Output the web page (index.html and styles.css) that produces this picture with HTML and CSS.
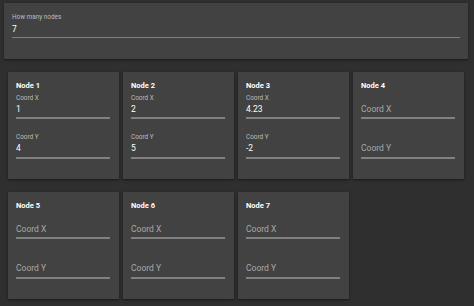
FILE: index.html
```html
<!DOCTYPE html>
<html lang="en">
<head>
  <meta charset="UTF-8">
  <meta name="viewport" content="width=device-width, initial-scale=1.0">
  <title>Nodes</title>
  <link rel="stylesheet" href="styles.css">
</head>
<body>
  <section class="card count-card">
    <div class="field">
      <label class="field-label" for="count">How many nodes</label>
      <input class="field-input" id="count" type="text" value="7">
    </div>
  </section>

  <section class="node-grid">
    <div class="card node-card">
      <h3>Node 1</h3>
      <div class="field">
        <label class="field-label">Coord X</label>
        <input class="field-input" type="text" value="1">
      </div>
      <div class="field">
        <label class="field-label">Coord Y</label>
        <input class="field-input" type="text" value="4">
      </div>
    </div>
    <div class="card node-card">
      <h3>Node 2</h3>
      <div class="field">
        <label class="field-label">Coord X</label>
        <input class="field-input" type="text" value="2">
      </div>
      <div class="field">
        <label class="field-label">Coord Y</label>
        <input class="field-input" type="text" value="5">
      </div>
    </div>
    <div class="card node-card">
      <h3>Node 3</h3>
      <div class="field">
        <label class="field-label">Coord X</label>
        <input class="field-input" type="text" value="4.23">
      </div>
      <div class="field">
        <label class="field-label">Coord Y</label>
        <input class="field-input" type="text" value="-2">
      </div>
    </div>
    <div class="card node-card">
      <h3>Node 4</h3>
      <div class="field">
        <label class="field-label"></label>
        <input class="field-input" type="text" placeholder="Coord X">
      </div>
      <div class="field">
        <label class="field-label"></label>
        <input class="field-input" type="text" placeholder="Coord Y">
      </div>
    </div>
    <div class="card node-card">
      <h3>Node 5</h3>
      <div class="field">
        <label class="field-label"></label>
        <input class="field-input" type="text" placeholder="Coord X">
      </div>
      <div class="field">
        <label class="field-label"></label>
        <input class="field-input" type="text" placeholder="Coord Y">
      </div>
    </div>
    <div class="card node-card">
      <h3>Node 6</h3>
      <div class="field">
        <label class="field-label"></label>
        <input class="field-input" type="text" placeholder="Coord X">
      </div>
      <div class="field">
        <label class="field-label"></label>
        <input class="field-input" type="text" placeholder="Coord Y">
      </div>
    </div>
    <div class="card node-card">
      <h3>Node 7</h3>
      <div class="field">
        <label class="field-label"></label>
        <input class="field-input" type="text" placeholder="Coord X">
      </div>
      <div class="field">
        <label class="field-label"></label>
        <input class="field-input" type="text" placeholder="Coord Y">
      </div>
    </div>
  </section>
</body>
</html>
```

FILE: styles.css
```css
:root {
  --bg-color: #2f2f2f;
  --card-color: #424242;
  --text-color: #ffffff;
  --label-color: #bdbdbd;
  --hint-color: #a8a8a8;
  --line-color: #808080;
}

* {
  margin: 0;
  padding: 0;
  box-sizing: border-box;
  font-family: Roboto, 'Liberation Sans', sans-serif;
}

body {
  background: var(--bg-color);
  color: var(--text-color);
  padding: 3px 6px 0 4px;
  min-height: 100vh;
}

.card {
  background: var(--card-color);
  box-shadow: 0 1px 3px rgba(0, 0, 0, 0.3), 0 1px 1px rgba(0, 0, 0, 0.2);
}

.count-card {
  height: 56px;
  padding: 10px 8px 0 8px;
}

.node-grid {
  display: grid;
  grid-template-columns: repeat(4, 111px);
  column-gap: 4px;
  row-gap: 13px;
  margin: 13px 0 0 4px;
}

.node-card {
  height: 107px;
  padding: 9px 9px 0 8px;
}

.node-card h3 {
  font-size: 7.5px;
  font-weight: 700;
  line-height: 10px;
  height: 10px;
}

.field {
  display: flex;
  flex-direction: column;
  border-bottom: 2px solid var(--line-color);
  padding-bottom: 2.5px;
}

.node-card .field {
  margin-top: 2.5px;
}

.node-card .field + .field {
  margin-top: 14px;
}

.count-card .field {
  border-bottom-width: 1.5px;
  padding-bottom: 2.5px;
}

.field-label {
  font-size: 6.4px;
  line-height: 8px;
  height: 8px;
  color: var(--label-color);
  margin-bottom: 2px;
}

.count-card .field-label {
  margin-bottom: 2.5px;
}

.field-input {
  background: transparent;
  border: none;
  outline: none;
  color: var(--text-color);
  font-size: 8.5px;
  line-height: 11px;
  height: 11px;
  width: 100%;
}

.field-input::placeholder {
  color: var(--hint-color);
  opacity: 1;
}
```
